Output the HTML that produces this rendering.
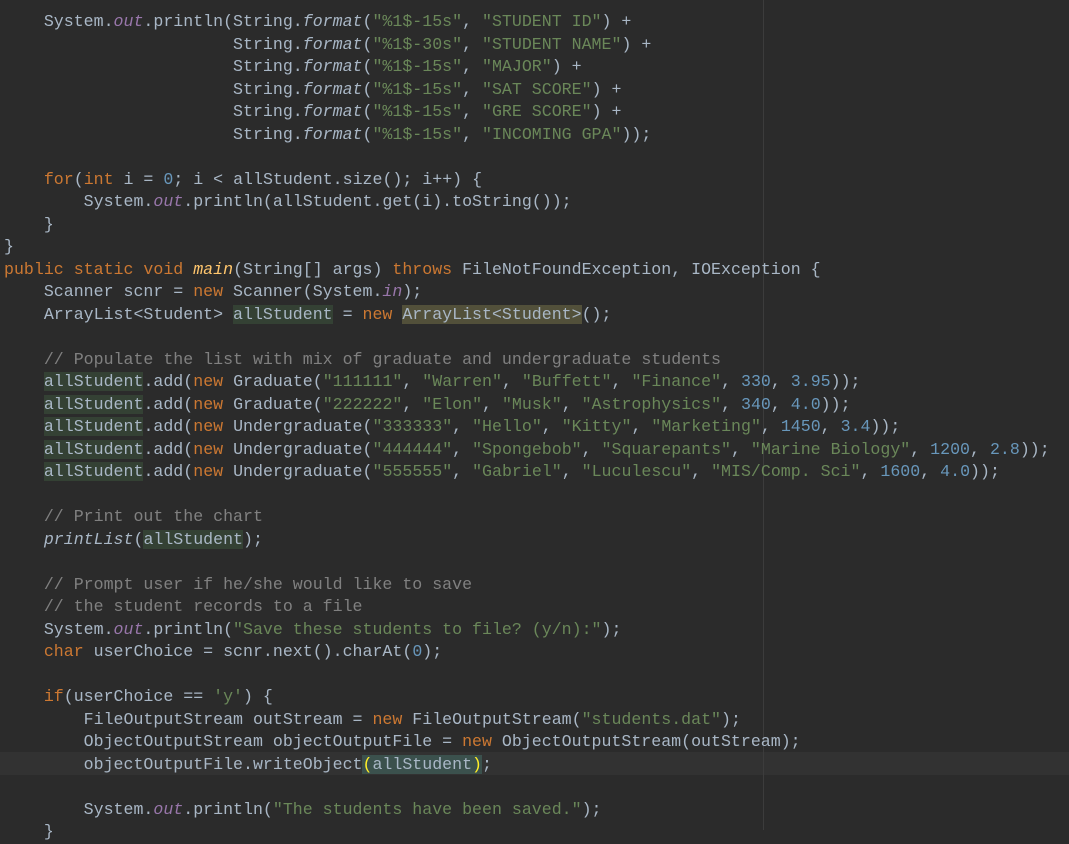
<!DOCTYPE html>
<html><head><meta charset="utf-8"><style>
html,body{margin:0;padding:0;background:#2b2b2b;width:1069px;height:830px;overflow:hidden}
pre{margin:0;position:absolute;left:4px;top:11px;font-family:"Liberation Mono",monospace;font-size:16.6px;line-height:22.5px;color:#a9b7c6;white-space:pre}
.k{color:#cc7832}.s{color:#6a8759}.n{color:#6897bb}.c{color:#808080}.f{color:#9876aa;font-style:italic}
.m{color:#ffc66d;font-style:italic}.i{font-style:italic}
.h{background:#344134}.h2{background:#52503a}.b{color:#ffef28;background:#3b514d}.hb{background:#3b514d}
.cur{position:absolute;left:0;top:752px;width:1069px;height:23px;background:#323232}
.mar{position:absolute;left:763px;top:0;width:1px;height:830px;background:#3c3c3c}
</style></head><body>
<div class="cur"></div><div class="mar"></div>
<pre>    System.<span class="f">out</span>.println(String.<span class="i">format</span>(<span class="s">"%1$-15s"</span>, <span class="s">"STUDENT ID"</span>) +
                       String.<span class="i">format</span>(<span class="s">"%1$-30s"</span>, <span class="s">"STUDENT NAME"</span>) +
                       String.<span class="i">format</span>(<span class="s">"%1$-15s"</span>, <span class="s">"MAJOR"</span>) +
                       String.<span class="i">format</span>(<span class="s">"%1$-15s"</span>, <span class="s">"SAT SCORE"</span>) +
                       String.<span class="i">format</span>(<span class="s">"%1$-15s"</span>, <span class="s">"GRE SCORE"</span>) +
                       String.<span class="i">format</span>(<span class="s">"%1$-15s"</span>, <span class="s">"INCOMING GPA"</span>));

    <span class="k">for</span>(<span class="k">int</span> i = <span class="n">0</span>; i &lt; allStudent.size(); i++) {
        System.<span class="f">out</span>.println(allStudent.get(i).toString());
    }
}
<span class="k">public static void</span> <span class="m">main</span>(String[] args) <span class="k">throws</span> FileNotFoundException, IOException {
    Scanner scnr = <span class="k">new</span> Scanner(System.<span class="f">in</span>);
    ArrayList&lt;Student&gt; <span class="h">allStudent</span> = <span class="k">new</span> <span class="h2">ArrayList&lt;Student&gt;</span>();

    <span class="c">// Populate the list with mix of graduate and undergraduate students</span>
    <span class="h">allStudent</span>.add(<span class="k">new</span> Graduate(<span class="s">"111111"</span>, <span class="s">"Warren"</span>, <span class="s">"Buffett"</span>, <span class="s">"Finance"</span>, <span class="n">330</span>, <span class="n">3.95</span>));
    <span class="h">allStudent</span>.add(<span class="k">new</span> Graduate(<span class="s">"222222"</span>, <span class="s">"Elon"</span>, <span class="s">"Musk"</span>, <span class="s">"Astrophysics"</span>, <span class="n">340</span>, <span class="n">4.0</span>));
    <span class="h">allStudent</span>.add(<span class="k">new</span> Undergraduate(<span class="s">"333333"</span>, <span class="s">"Hello"</span>, <span class="s">"Kitty"</span>, <span class="s">"Marketing"</span>, <span class="n">1450</span>, <span class="n">3.4</span>));
    <span class="h">allStudent</span>.add(<span class="k">new</span> Undergraduate(<span class="s">"444444"</span>, <span class="s">"Spongebob"</span>, <span class="s">"Squarepants"</span>, <span class="s">"Marine Biology"</span>, <span class="n">1200</span>, <span class="n">2.8</span>));
    <span class="h">allStudent</span>.add(<span class="k">new</span> Undergraduate(<span class="s">"555555"</span>, <span class="s">"Gabriel"</span>, <span class="s">"Luculescu"</span>, <span class="s">"MIS/Comp. Sci"</span>, <span class="n">1600</span>, <span class="n">4.0</span>));

    <span class="c">// Print out the chart</span>
    <span class="i">printList</span>(<span class="h">allStudent</span>);

    <span class="c">// Prompt user if he/she would like to save</span>
    <span class="c">// the student records to a file</span>
    System.<span class="f">out</span>.println(<span class="s">"Save these students to file? (y/n):"</span>);
    <span class="k">char</span> userChoice = scnr.next().charAt(<span class="n">0</span>);

    <span class="k">if</span>(userChoice == <span class="s">'y'</span>) {
        FileOutputStream outStream = <span class="k">new</span> FileOutputStream(<span class="s">"students.dat"</span>);
        ObjectOutputStream objectOutputFile = <span class="k">new</span> ObjectOutputStream(outStream);
        objectOutputFile.writeObject<span class="b">(</span><span class="hb">allStudent</span><span class="b">)</span>;

        System.<span class="f">out</span>.println(<span class="s">"The students have been saved."</span>);
    }
</pre>
</body></html>
